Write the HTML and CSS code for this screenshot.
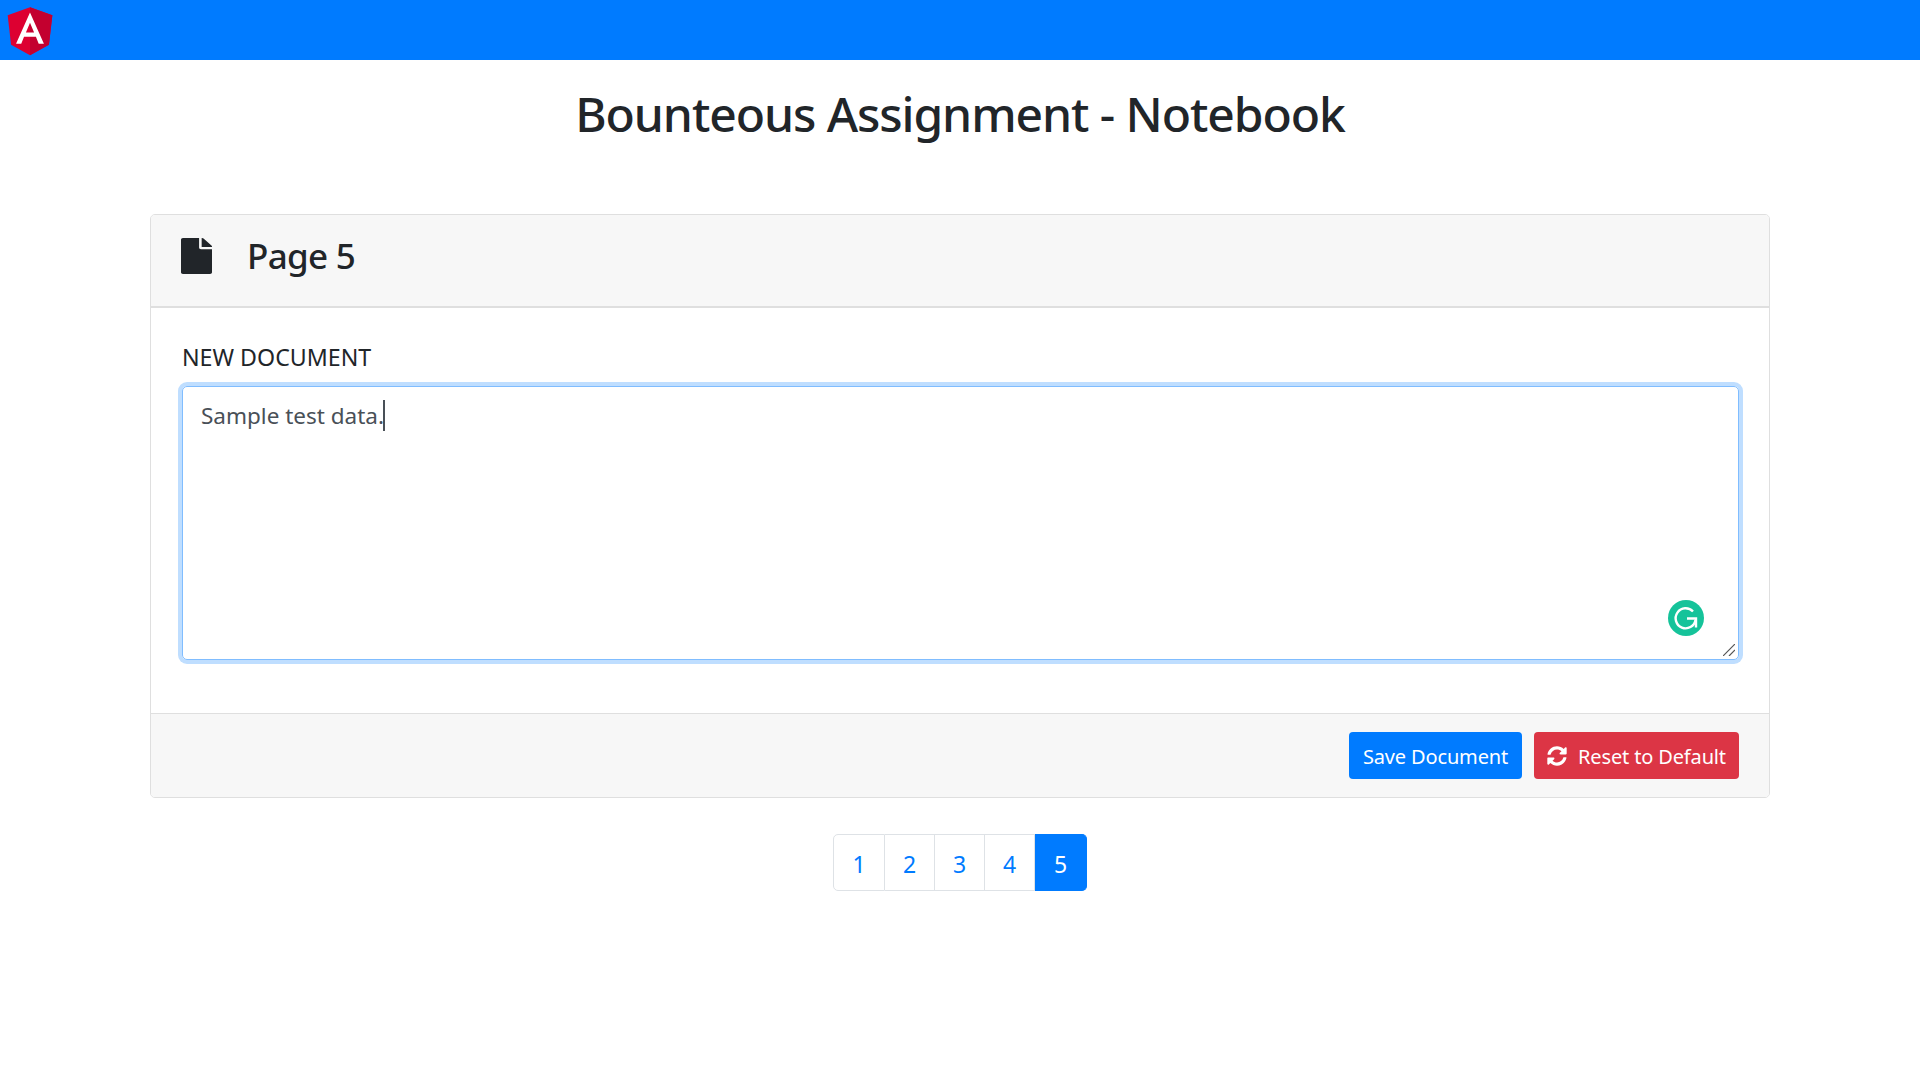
FILE: index.html
```html
<!DOCTYPE html>
<html lang="en">
<head>
<meta charset="utf-8">
<title>Bounteous Assignment - Notebook</title>
<link rel="stylesheet" href="styles.css">
</head>
<body>
<nav class="navbar">
  <svg class="logo" viewBox="0 0 250 250" aria-hidden="true">
    <polygon fill="#DD0031" points="125,30 125,30 125,30 31.9,63.2 46.1,186.3 125,230 125,230 125,230 203.9,186.3 218.1,63.2"/>
    <polygon fill="#C3002F" points="125,30 125,52.2 125,52.1 125,153.4 125,153.4 125,230 125,230 203.9,186.3 218.1,63.2"/>
    <path fill="#FFFFFF" d="M125,52.1L66.8,182.6h0h21.7h0l11.7-29.2h49.4l11.7,29.2h0h21.7h0L125,52.1L125,52.1L125,52.1L125,52.1L125,52.1z M142,135.4H108l17-40.9L142,135.4z"/>
  </svg>
</nav>
<main class="container">
  <h1 class="title">Bounteous Assignment - Notebook</h1>
  <section class="card">
    <header class="card-header">
      <svg class="doc-icon" viewBox="0 0 384 512" preserveAspectRatio="none" aria-hidden="true"><path fill="#212529" d="M224 136V0H24C10.700 0 0 10.700 0 24v464c0 13.300 10.700 24 24 24h336c13.300 0 24-10.700 24-24V160H248c-13.200 0-24-10.800-24-24zm160-14.100v6.100H256V0h6.100c6.400 0 12.500 2.500 17 7l97.900 98c4.500 4.500 7 10.600 7 16.900z"/></svg>
      <h2 class="page-title">Page 5</h2>
    </header>
    <div class="card-body">
      <label class="doc-label">NEW DOCUMENT</label>
      <div class="area">
        <span class="area-text">Sample test data.</span><span class="caret"></span>
        <svg class="grammarly" viewBox="0 0 36 36" aria-hidden="true">
          <circle cx="18" cy="18" r="18" fill="#15C39A"/>
          <path fill="none" stroke="#fff" stroke-width="2.400" d="M25 11.500A10 10 0 1 0 27.500 20"/>
          <path fill="none" stroke="#fff" stroke-width="2.400" d="M19 18.500h9v9"/>
        </svg>
        <svg class="grip" viewBox="0 0 12 12" aria-hidden="true">
          <path stroke="#555" stroke-width="1.200" d="M0 12L12 0M6 12L12 6"/>
        </svg>
      </div>
    </div>
    <footer class="card-footer">
      <button class="btn btn-primary">Save Document</button>
      <button class="btn btn-danger">
        <svg class="sync" viewBox="0 0 512 512" aria-hidden="true"><path fill="#fff" d="M370.720 133.280C339.458 104.008 298.888 87.962 255.848 88c-77.458.068-144.328 53.178-162.791 126.850-1.344 5.363-6.122 9.150-11.651 9.150H24.103c-7.498 0-13.194-6.807-11.807-14.176C33.933 94.924 134.813 8 256 8c66.448 0 126.791 26.136 171.315 68.685L463.030 40.970C478.149 25.851 504 36.559 504 57.941V192c0 13.255-10.745 24-24 24H345.941c-21.382 0-32.090-25.851-16.971-40.971l41.750-41.749zM32 296h134.059c21.382 0 32.090 25.851 16.971 40.971l-41.750 41.750c31.262 29.273 71.835 45.319 114.876 45.280 77.418-.070 144.315-53.144 162.787-126.849 1.344-5.363 6.122-9.150 11.651-9.150h57.304c7.498 0 13.194 6.807 11.807 14.176C478.067 417.076 377.187 504 256 504c-66.448 0-126.791-26.136-171.315-68.685L48.970 471.030C33.851 486.149 8 475.441 8 454.059V320c0-13.255 10.745-24 24-24z"/></svg>
        <span>Reset to Default</span>
      </button>
    </footer>
  </section>
  <ul class="pagination">
    <li class="page-item">1</li>
    <li class="page-item">2</li>
    <li class="page-item">3</li>
    <li class="page-item">4</li>
    <li class="page-item active">5</li>
  </ul>
</main>
</body>
</html>
```
FILE: styles.css
```css
* { box-sizing: border-box; }
html, body { margin: 0; padding: 0; }
body {
  background: #fff;
  color: #212529;
  font-family: "Noto Sans", "Open Sans", "Liberation Sans", sans-serif;
  font-size: 20px;
  line-height: 1.5;
}
.navbar {
  height: 60px;
  background: #007bff;
  display: flex;
  align-items: center;
}
.logo { width: 60px; height: 60px; display: block; }
.container { padding: 0 150px; }
.title {
  margin: 16px 0 0;
  height: 74px;
  text-align: center;
  font-size: 48px;
  line-height: 75px;
  font-weight: 500;
  letter-spacing: -1.07px;
}
.card {
  margin-top: 64px;
  border: 1px solid #dfdfdf;
  border-radius: 5px;
  overflow: hidden;
}
.card-header {
  height: 93px;
  background: #f7f7f7;
  border-bottom: 2px solid #dfdfdf;
  padding: 22px 30px;
  display: flex;
  align-items: flex-start;
  gap: 34px;
}
.doc-icon { width: 31px; height: 36px; display: block; flex: none; margin: 1px 1px 0 0; }
.page-title { margin: 0; font-size: 35px; line-height: 38px; font-weight: 500; letter-spacing: -0.7px; }
.card-body { height: 405px; padding: 34px 30px 0; }
.doc-label { display: block; font-size: 23.200px; line-height: 30px; margin-left: 1px; }
.area {
  position: relative;
  margin: 14px 0 0 1px;
  height: 274px;
  width: 1557px;
  border: 1px solid #80bdff;
  border-radius: 5px;
  box-shadow: 0 0 0 4px #bfdeff;
  padding: 14px 18px;
  color: #495057;
  font-size: 22.500px;
  line-height: 30px;
  display: flex;
  align-items: flex-start;
}
.caret { width: 2px; height: 31px; background: #495057; margin: -1px 0 0 -1px; }
.grammarly { position: absolute; right: 34px; bottom: 23px; width: 36px; height: 36px; }
.grip { position: absolute; right: 3px; bottom: 3px; width: 12px; height: 12px; }
.card-footer {
  height: 84px;
  background: #f7f7f7;
  border-top: 1px solid #dfdfdf;
  padding: 18px 30px 0 0;
  display: flex;
  justify-content: flex-end;
  gap: 12px;
}
.btn {
  height: 47px;
  border: 0;
  border-radius: 4px;
  color: #fff;
  font-family: inherit;
  font-size: 20px;
  line-height: 47px;
  padding: 2px 0 0;
  display: flex;
  align-items: center;
  white-space: nowrap;
  letter-spacing: -0.150px;
}
.btn-primary { background: #007bff; width: 173px; justify-content: center; }
.btn-danger { background: #dc3545; width: 205px; justify-content: center; gap: 11px; }
.sync { width: 20px; height: 20px; flex: none; margin-top: -2px; }
.pagination {
  list-style: none;
  display: flex;
  margin: 36px 0 0;
  padding: 0;
  justify-content: center;
}
.page-item {
  width: 50px;
  height: 57px;
  border: 1px solid #dee2e6;
  border-left-width: 0;
  color: #007bff;
  font-size: 23px;
  line-height: 59px;
  text-align: center;
  background: #fff;
}
.page-item:first-child { border-left-width: 1px; width: 52px; border-radius: 5px 0 0 5px; }
.page-item.active { background: #007bff; border-color: #007bff; color: #fff; width: 52px; border-radius: 0 5px 5px 0; }
```
